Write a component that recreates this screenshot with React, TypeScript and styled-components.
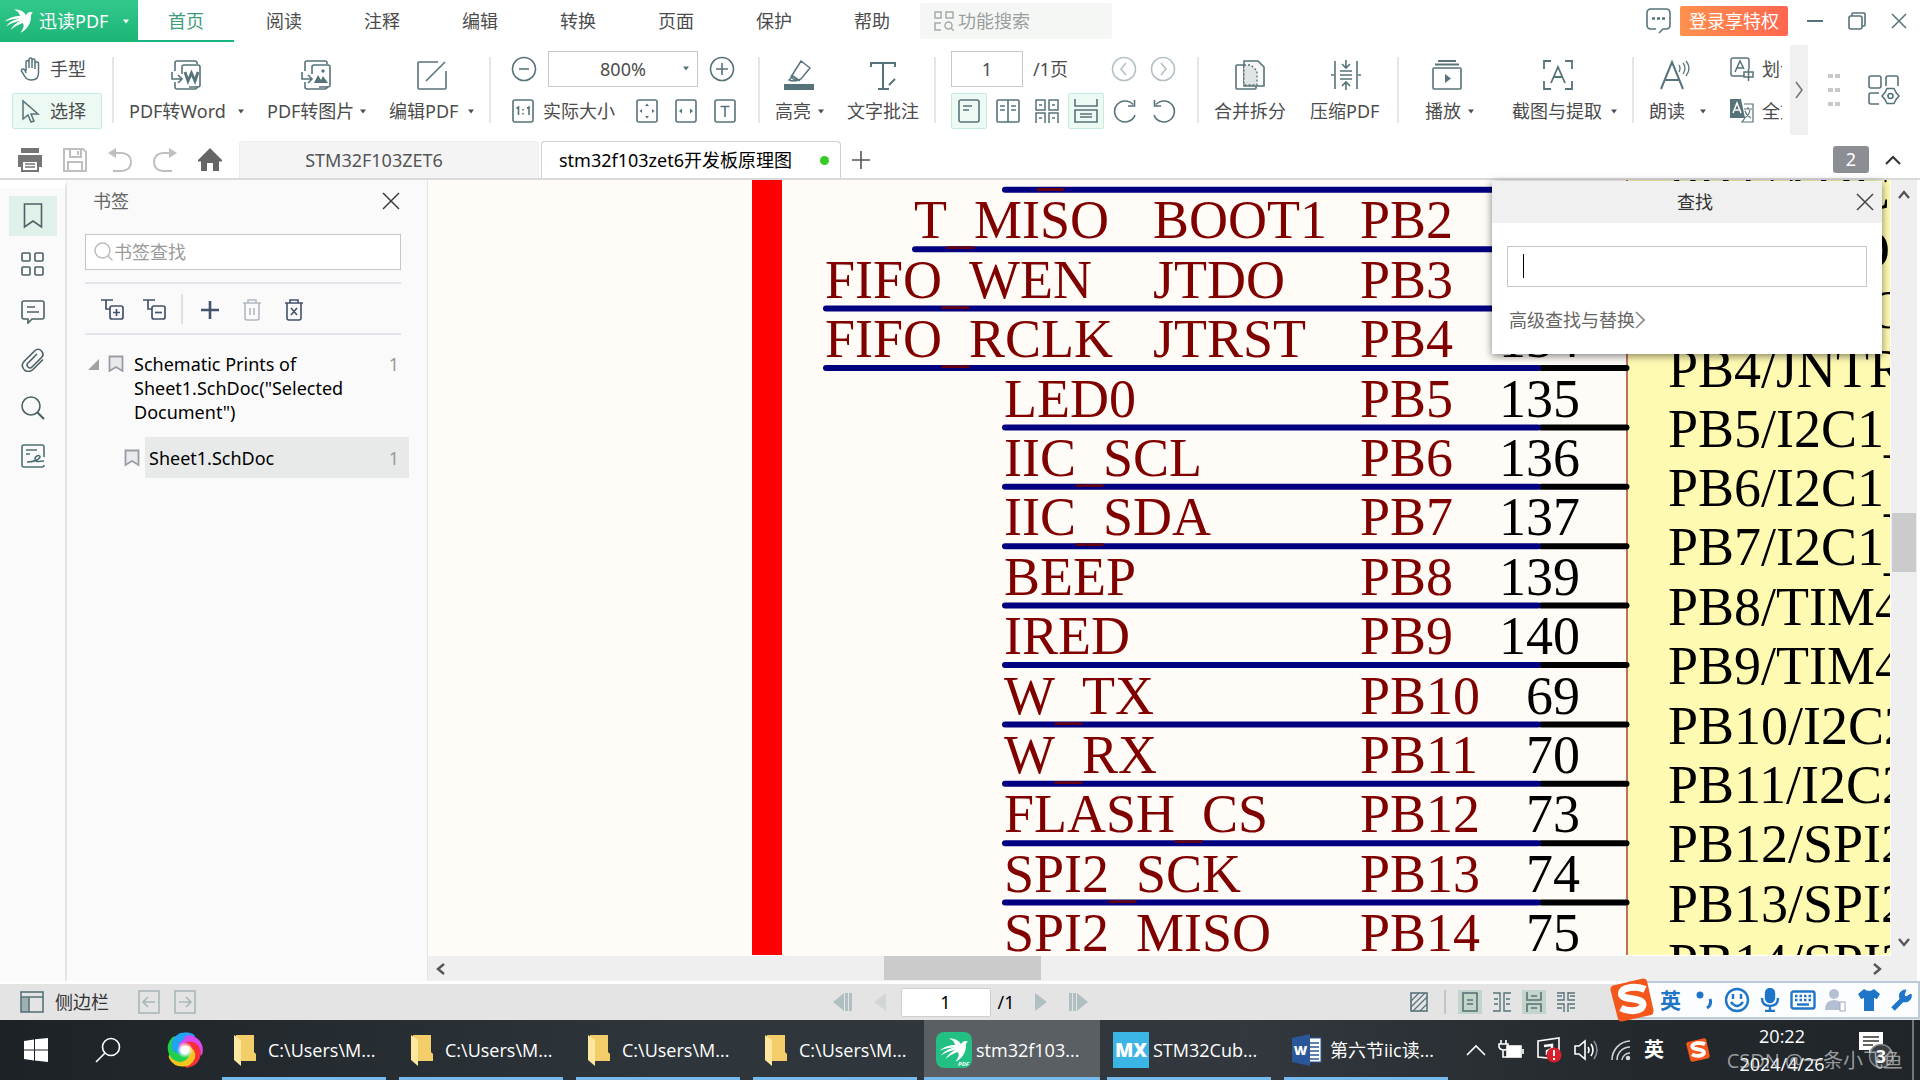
import React from "react";
import styled, { createGlobalStyle } from "styled-components";

const UI = `"Noto Sans", "Noto Sans CJK SC", sans-serif`;
const INK = "#57737a";
const PALE = "#b3c1c3";
const MINT = "#ecfaf3";
const MINT_LINE = "#c5ecdd";

const GlobalStyle = createGlobalStyle`
  * { box-sizing: border-box; }
  html, body { margin: 0; padding: 0; }
  body { font-family: ${UI}; font-size: 18px; line-height: 24px; color: #4c4c4c; background: #fff; overflow: hidden; }
  button, input, select { font: inherit; color: inherit; margin: 0; }
  button { border: 0; background: none; padding: 0; cursor: pointer; white-space: nowrap; }
  a { color: inherit; text-decoration: none; }
  svg { display: block; flex: none; }
`;

const Page = styled.div`
  display: flex;
  flex-direction: column;
  height: 100vh;
  min-height: 600px;
  position: relative;
`;

/* ---------- icons ---------- */
type IconProps = { w?: number; h?: number; color?: string; sw?: number; children: React.ReactNode };
const Icon = ({ w = 24, h = 24, color = INK, sw = 1.6, children }: IconProps) => (
  <svg width={w} height={h} viewBox={`0 0 ${w} ${h}`} fill="none" stroke={color} strokeWidth={sw} aria-hidden="true">
    {children}
  </svg>
);
const Caret = ({ color = "#4c4c4c" }: { color?: string }) => (
  <svg width="8" height="5" viewBox="0 0 8 5" aria-hidden="true"><path d="M1 0.5h6L4 4.5z" fill={color} /></svg>
);
const Close = ({ size = 18, color = "#3c3c3c" }) => (
  <Icon w={size} h={size} color={color} sw={1.5}><path d={`M1 1L${size - 1} ${size - 1}M${size - 1} 1L1 ${size - 1}`} /></Icon>
);
const BIRD = "M9 .5C15 .2 20 3 21 6.500C22 3.500 25 2 28 3.500C26.500 4.200 26 5.500 26 7.500C26 14 22.500 20.500 15.500 23.800C19 19 19.500 16 17.500 14C14 15.500 9 17.500 5.500 21C8 16.500 12 13.500 15.500 11.800C10 13 5 14.500 1 17.500C4 13 9.500 10.500 14.500 9.500C10 9.500 4.500 10.500 0 12.500C4 8.500 10 7 15 7C14.500 4 12.500 1.800 9 .5Z";
const Bird = () => (
  <svg width="28" height="24" viewBox="0 0 28 24" fill="#fff" aria-hidden="true"><path d={BIRD} /></svg>
);
const Sogou = ({ size = 44 }) => (
  <svg width={size} height={size} viewBox="0 0 44 44" aria-hidden="true">
    <path d="M3 7.500L33 .5Q36 0 37 3L43.500 32Q44 36 41 37L12 43.500Q9 44 8 41L.5 12Q0 8.500 3 7.500Z" fill="#f4571c" />
    <path d="M35 11.500C27 7.500 12 9 11.500 15.500C11 23 33 18.500 33 26.500C32.500 33.500 19 34.500 11 30" fill="none" stroke="#fff" strokeWidth="7" />
  </svg>
);

const PageWord = () => (
  <Icon w={30} h={30}>
    <path d="M4 11V3q0-2 2-2h18q2 0 2 2v1M4 22v5q0 2 2 2h18q2 0 2-2v-1" />
    <path d="M11 14V7q0-2 2-2h14q2 0 2 2v18q0 2-2 2H18" />
    <path d="M1 12v7h9M7 15l4 4-4 4" />
    <path d="M14 12l3 9 3.500-8 3.500 8 3-9" strokeWidth="2.800" />
  </Icon>
);
const PageImage = () => (
  <Icon w={30} h={30}>
    <path d="M4 11V3q0-2 2-2h18q2 0 2 2v1M4 22v5q0 2 2 2h18q2 0 2-2v-1" />
    <path d="M11 14V7q0-2 2-2h14q2 0 2 2v18q0 2-2 2H18" />
    <path d="M1 12v7h9M7 15l4 4-4 4" />
    <path d="M13 23l4-8 3 5 2-4 5 7z" fill={INK} stroke="none" /><circle cx="22" cy="11" r="1.700" fill={INK} stroke="none" />
  </Icon>
);
const EditPage = () => (
  <Icon w={30} h={30}><path d="M21 2H2Q1 2 1 3v25q0 1 1 1h26q1 0 1-1V11M9 21L28 2" /></Icon>
);
const Hand = () => (
  <Icon w={22} h={24} sw={1.5}>
    <path d="M6 14V5q0-1.500 1.500-1.500T9 5v6V2.500Q9 1 10.500 1T12 2.500V11V3.500Q12 2 13.500 2T15 3.500V12V6.500Q15 5 16.800 5T18.500 6.500V16q0 7-7 7-5 0-7-4L1.500 14Q1 12 3 12t3 4" />
  </Icon>
);
const Cursor = () => (
  <Icon w={22} h={24} sw={1.5}><path d="M3 2v18l5-4 3 7 3-1-3-7h7z" /></Icon>
);
const Circle = ({ kind, color = INK }: { kind: string; color?: string }) => (
  <Icon w={26} h={26} color={color}>
    <circle cx="13" cy="13" r="11.500" />
    {kind === "minus" && <path d="M8 13h10" />}
    {kind === "plus" && <path d="M7 13h12M13 7v12" />}
    {kind === "prev" && <path d="M15 7l-5 6 5 6" />}
    {kind === "next" && <path d="M11 7l5 6-5 6" />}
  </Icon>
);
const Frame = ({ kind }: { kind: string }) => (
  <Icon w={24} h={24}>
    <rect x="2" y="1" width="20" height="22" rx="2" />
    {kind === "one" && <path d="M5.500 9.500l2-1.500v8M16 9.500l2-1.500v8M12 10v1.500M12 14v1.500" />}
    {kind === "fit" && <path d="M12 4.500l2 2.500h-4zM12 19.500l2-2.500h-4zM4.500 12L7 10v4zM19.500 12L17 10v4z" fill={INK} stroke="none" />}
    {kind === "width" && <path d="M5 12l3-2.500v5zM19 12l-3-2.500v5z" fill={INK} stroke="none" />}
    {kind === "text" && <path d="M7.500 7.500h9M12 7.500V18" />}
    {kind === "page" && <path d="M6 7h9M6 11h6" />}
  </Icon>
);
const TwoUp = () => (
  <Icon w={24} h={24}><rect x="1" y="1" width="22" height="22" rx="1" /><path d="M12 1v22M4 7h5M4 11h5M15 7h5M15 11h5" /></Icon>
);
const FourUp = () => (
  <Icon w={24} h={24} sw={1.5}>
    <rect x="1" y="1" width="9" height="10" /><rect x="14" y="1" width="9" height="10" />
    <path d="M1 24V14h9v10M14 24V14h9v10M4 6h3M17 6h3M4 19h3M17 19h3" />
  </Icon>
);
const Continuous = () => (
  <Icon w={24} h={24}><path d="M1 0v7h22V0M1 11h22v12H1zM6 15h12M6 18h12" /></Icon>
);
const Rotate = ({ flip }: { flip?: boolean }) => (
  <Icon w={24} h={24}>
    <g transform={flip ? "matrix(-1 0 0 1 24 0)" : undefined}><path d="M20 5.500A10.500 10.500 0 1 0 22 16M21.500 1v6h-6.500" /></g>
  </Icon>
);
const Highlight = () => (
  <Icon w={32} h={30} sw={1.5}>
    <path d="M8 17L18 1l9 7-9 11-5 2zM9 15l8 6M6 20l4-4 4 4-5 1z" /><rect x="1" y="24" width="30" height="6" fill={INK} stroke="none" />
  </Icon>
);
const TextNote = () => (
  <Icon w={28} h={30} sw={2}><path d="M2 7V3h24v4M14 3v26M9 29h11M20 25l6-6" /></Icon>
);
const Merge = () => (
  <Icon w={30} h={30}>
    <path d="M9 5H2Q1 5 1 6v22q0 1 1 1h18q1 0 1-1v-2" /><path d="M9 1h14l6 6v19H9z" fill="#f6f7f7" />
    <path d="M9 5h7l6 6v14H9z" strokeDasharray="2 2" fill="#e0e4e5" strokeWidth="1.300" />
  </Icon>
);
const Compress = () => (
  <Icon w={30} h={30}><path d="M4 1v28M26 1v28M0 15h3M27 15h3M9 11h12M9 15h12M9 19h12M15 0v7M11 4l4 4 4-4M15 30v-7M11 26l4-4 4 4" /></Icon>
);
const Play = () => (
  <Icon w={30} h={30}><path d="M6 1h18M3 4.500h24" strokeWidth="2" /><rect x="1" y="8" width="28" height="21" rx="1" /><path d="M13 14l6 4.500-6 4.500z" fill={INK} stroke="none" /></Icon>
);
const Capture = () => (
  <Icon w={30} h={30} sw={1.8}><path d="M8 1H1v8M22 1h7v8M8 29H1v-8M22 29h7v-8M8 23l7-16 7 16M11 17h8" /></Icon>
);
const ReadAloud = () => (
  <Icon w={30} h={30}><path d="M1 29L12 2l11 27M5 20h14" strokeWidth="2" /><path d="M19 5q2 3 0 7M23 3q4 5 0 11M26 1q6 7 0 15" strokeWidth="1.300" /></Icon>
);
const WordTrans = () => (
  <Icon w={24} h={24} sw={1.5}><path d="M14 19H3q-2 0-2-2V3q0-2 2-2h14q2 0 2 2v9M5 15l5-11 4 8M7 11h6M14 15h9v5h-9zM18.500 12v12" /></Icon>
);
const FullTrans = () => (
  <Icon w={24} h={24} sw={1.5}><path d="M0 0h11l4 19H0z" fill={INK} stroke="none" /><path d="M3 14l4-10 4 10M5 11h5" stroke="#fff" /><path d="M14 5h9v18H12l3-4M14 10h8M18 8v2M20 11q-1 6-6 8M15 12q2 5 6 7" strokeWidth="1.200" /></Icon>
);

/* ---------- title bar ---------- */
const TitleBar = styled.header`
  display: flex;
  align-items: center;
  height: 42px;
  flex: none;
`;
const Brand = styled.button`
  display: flex;
  align-items: center;
  width: 138px;
  height: 42px;
  padding: 0 8px 0 5px;
  gap: 6px;
  color: #fff;
  background: linear-gradient(#33c88c, #1cb576);
  > svg:last-child { margin-left: auto; }
`;
const Menu = styled.nav`
  display: flex;
  gap: 2px;
  height: 42px;
`;
const MenuItem = styled.button<{ $on?: boolean }>`
  width: 96px;
  padding-top: 2px;
  color: ${p => (p.$on ? "#3e9d78" : "#4c4c4c")};
  border-bottom: 2px solid ${p => (p.$on ? "#17b583" : "transparent")};
`;
const SearchBox = styled.label`
  display: flex;
  align-items: center;
  gap: 4px;
  width: 192px;
  height: 36px;
  padding: 0 14px;
  border-radius: 3px;
  background: #f5f7f5;
  input { width: 100%; border: 0; outline: 0; background: none; padding: 0; }
  input::placeholder { color: #9a9e9e; opacity: 1; }
`;
const WindowTools = styled.div`
  display: flex;
  align-items: center;
  margin-left: auto;
  padding-right: 7px;
`;
const Login = styled.button`
  width: 108px;
  height: 30px;
  margin: 0 13px 0 8px;
  border-radius: 2px;
  color: #fff;
  background: linear-gradient(90deg, #ff914d, #ff6650);
`;
const WinButton = styled.button`
  display: grid;
  place-items: center;
  width: 28px;
  height: 30px;
  & + & { margin-left: 14px; }
`;

/* ---------- ribbon ---------- */
const Ribbon = styled.section`
  display: flex;
  height: 99px;
  flex: none;
`;
const Tools = styled.div`
  display: flex;
  flex: 1 1 0;
  min-width: 0;
  overflow: hidden;
  padding-top: 9px;
`;
const Group = styled.div<{ $w: number; $pad?: number; $gap?: number; $line?: boolean }>`
  display: flex;
  flex: none;
  width: ${p => p.$w}px;
  height: 78px;
  padding-left: ${p => p.$pad ?? 0}px;
  gap: ${p => p.$gap ?? 0}px;
  background: ${p => (p.$line === false ? "none" : "linear-gradient(#e6e6e6, #e6e6e6) right center / 2px 66px no-repeat")};
`;
const Stack = styled.div`
  display: flex;
  flex-direction: column;
  gap: 6px;
`;
const Line = styled.div<{ $gap?: number }>`
  display: flex;
  align-items: center;
  height: 36px;
  gap: ${p => p.$gap ?? 3}px;
`;
const SmallTool = styled.button<{ $on?: boolean }>`
  display: flex;
  align-items: center;
  gap: 8px;
  height: 36px;
  padding: 0 ${p => (p.$on ? 14 : 15)}px 0 7px;
  border: 1px solid ${p => (p.$on ? MINT_LINE : "transparent")};
  border-radius: 2px;
  background: ${p => (p.$on ? MINT : "none")};
`;
const ActualSize = styled.button`
  display: flex;
  align-items: center;
  gap: 8px;
  width: 109px;
`;
const PageTotal = styled.span`
  width: 68px;
`;
const Square = styled.button<{ $on?: boolean }>`
  display: grid;
  place-items: center;
  width: 36px;
  height: 36px;
  border: 1px solid ${p => (p.$on ? MINT_LINE : "transparent")};
  border-radius: 2px;
  background: ${p => (p.$on ? MINT : "none")};
`;
const BigTool = styled.button<{ $w: number; $tail: number }>`
  display: flex;
  flex-direction: column;
  align-items: center;
  flex: none;
  width: ${p => p.$w}px;
  padding-top: 9px;
  gap: 3px;
  > svg { margin-right: ${p => p.$tail}px; }
`;
const BigLabel = styled.span`
  display: flex;
  align-items: center;
  justify-content: space-between;
  width: 100%;
  height: 36px;
`;
const ZoomBox = styled.span`
  position: relative;
  width: 150px;
  height: 36px;
  margin: 0 11px;
  select {
    appearance: none;
    width: 100%;
    height: 100%;
    padding: 0 8px;
    text-align-last: center;
    border: 1px solid #c8c8c8;
    border-radius: 0;
    background: #fff;
  }
  svg { position: absolute; right: 8px; top: 15px; pointer-events: none; }
`;
const PageInput = styled.input`
  width: 72px;
  height: 36px;
  padding: 0;
  text-align: center;
  border: 1px solid #c8c8c8;
  background: #fff;
`;
const Expander = styled.button`
  display: grid;
  place-items: center;
  width: 18px;
  height: 90px;
  margin: 3px 20px 0 8px;
  border-radius: 2px;
  background: #f0f0f0;
`;
const RibbonEnd = styled.div`
  display: flex;
  align-items: center;
  gap: 28px;
  padding-right: 20px;
  height: 96px;
`;

type BigProps = { w: number; icon: React.ReactNode; label: string; caret?: boolean; tail?: number };
const Big = ({ w, icon, label, caret, tail = 0 }: BigProps) => (
  <BigTool $w={w} $tail={tail}>
    {icon}
    <BigLabel><span>{label}</span>{caret && <Caret />}</BigLabel>
  </BigTool>
);

/* ---------- document tabs ---------- */
const DocBar = styled.div`
  display: flex;
  align-items: center;
  height: 39px;
  flex: none;
  border-bottom: 2px solid #dadada;
`;
const Quick = styled.div`
  display: flex;
  align-items: center;
  gap: 21px;
  width: 239px;
  padding-left: 18px;
`;
const DocTab = styled.button<{ $on?: boolean }>`
  display: flex;
  align-items: center;
  justify-content: ${p => (p.$on ? "space-between" : "center")};
  width: 300px;
  height: 37px;
  margin-right: 2px;
  padding: 0 ${p => (p.$on ? 11 : 30)}px 0 ${p => (p.$on ? 17 : 0)}px;
  color: ${p => (p.$on ? "#000" : "#555")};
  background: ${p => (p.$on ? "#fff" : "#f4f4f4")};
  border: 1px solid ${p => (p.$on ? "#cfcfcf" : "#ececec")};
  border-bottom: 0;
  border-radius: 4px 4px 0 0;
`;
const Dot = styled.i`
  width: 9px;
  height: 9px;
  border-radius: 50%;
  background: #34cc24;
`;
const NewTab = styled.button`
  margin-left: 9px;
`;
const TabCount = styled.span`
  width: 36px;
  height: 27px;
  line-height: 27px;
  margin: 0 16px 0 auto;
  border-radius: 3px;
  text-align: center;
  color: #fff;
  background: #8b8f93;
`;
const Collapse = styled.button`
  margin-right: 19px;
`;

/* ---------- body ---------- */
const Body = styled.main`
  display: flex;
  flex: 1 1 0;
  min-height: 0;
  padding-right: 3px;
  background: #fff;
`;
const Rail = styled.nav`
  display: flex;
  flex-direction: column;
  align-items: center;
  gap: 8px;
  width: 67px;
  padding-top: 8px;
  border-top: 8px solid #fff;
  border-right: 2px solid #e4e4ec;
  background: #fafafa;
`;
const RailButton = styled.button<{ $on?: boolean }>`
  display: grid;
  place-items: center;
  width: 48px;
  height: 40px;
  background: ${p => (p.$on ? "#e0f1ea" : "none")};
`;
const Side = styled.aside`
  width: 361px;
  border-right: 1px solid #e4e4ec;
  background: #fafafa;
  padding: 9px 18px 0;
`;
const SideHead = styled.div`
  display: flex;
  align-items: center;
  justify-content: space-between;
  height: 24px;
  padding: 0 1px 0 8px;
  margin-right: 8px;
  h2 { margin: 0; font-size: 18px; font-weight: 400; color: #666; }
`;
const SideSearch = styled.label`
  display: flex;
  align-items: center;
  height: 36px;
  margin: 21px 8px 12px 0;
  padding: 0 8px;
  border: 1px solid #c6c6c6;
  background: #fff;
  input { width: 100%; border: 0; outline: 0; padding: 0; }
  input::placeholder { color: #9b9b9b; opacity: 1; }
`;
const SideTools = styled.div`
  display: flex;
  align-items: center;
  gap: 18px;
  height: 53px;
  margin-right: 8px;
  padding-left: 15px;
  border: solid #e4e4ec;
  border-width: 2px 0;
  > button { padding-top: 2px; }
  > i { width: 2px; height: 30px; margin: 0 -3px; background: #dfdfe6; }
`;
const Tree = styled.ul`
  list-style: none;
  margin: 17px 0 0;
  padding: 0;
  color: #000;
`;
const Leaf = styled.li<{ $level: number }>`
  display: flex;
  align-items: flex-start;
  padding-left: ${p => p.$level * 36}px;
  & + & { margin-top: 13px; }
`;
const LeafIcons = styled.span<{ $tall?: boolean }>`
  display: flex;
  align-items: center;
  gap: 9px;
  height: ${p => (p.$tall ? 41 : 24)}px;
  padding-left: 3px;
`;
const LeafText = styled.button<{ $on?: boolean }>`
  display: flex;
  flex: 1;
  justify-content: space-between;
  align-items: flex-start;
  margin-left: ${p => (p.$on ? 5 : 8)}px;
  padding: ${p => (p.$on ? 9 : 0)}px 10px ${p => (p.$on ? 8 : 0)}px ${p => (p.$on ? 4 : 2)}px;
  text-align: left;
  white-space: normal;
  background: ${p => (p.$on ? "#e8eaea" : "none")};
  > span:first-child { max-width: 230px; }
  > span:last-child { color: #9a9a9a; }
`;

const Viewer = styled.section`
  position: relative;
  display: grid;
  flex: 1;
  min-width: 0;
  grid-template-columns: minmax(0, 1fr) 26px;
  grid-template-rows: minmax(0, 1fr) 25px;
  background: #efefef;
`;
const Sheet = styled.div`
  overflow: hidden;
  background: #fffcf7;
  border: solid #fff;
  border-width: 0 1px 1px 0;
  svg { width: 100%; height: 100%; }
  text { font-family: "Liberation Serif", serif; font-size: 54px; white-space: pre; }
`;
const VScroll = styled.div`
  display: flex;
  flex-direction: column;
  align-items: center;
  padding: 9px 0 8px;
  > i { width: 24px; height: 59px; background: #cbcbcb; margin-top: 312px; }
  > svg:last-child { margin-top: auto; }
`;
const HScroll = styled.div`
  display: flex;
  align-items: center;
  padding: 0 8px 0 7px;
  > i { width: 157px; height: 24px; background: #cbcbcb; margin: 0 auto 1px 437px; }
`;

/* ---------- find dialog ---------- */
const Find = styled.section`
  position: absolute;
  top: 1px;
  right: 35px;
  width: 390px;
  background: #fff;
  box-shadow: 0 2px 8px rgba(0, 0, 0, 0.5);
`;
const FindHead = styled.div`
  display: flex;
  align-items: center;
  height: 42px;
  padding: 0 8px 0 42px;
  background: #f0f0f0;
  h2 { flex: 1; margin: 0; text-align: center; font-size: 18px; font-weight: 400; color: #333; }
`;
const FindBody = styled.div`
  position: relative;
  padding: 23px 15px 22px;
  input { display: block; width: 100%; height: 41px; padding: 0 15px; border: 1px solid #c6c6c6; outline: 0; }
  > i { position: absolute; left: 31px; top: 31px; width: 1px; height: 24px; background: #000; }
`;
const FindLink = styled.a`
  display: flex;
  align-items: center;
  margin: 21px 0 0 2px;
  color: #666;
`;

/* ---------- status bar ---------- */
const Status = styled.footer`
  display: grid;
  grid-template-columns: 1fr auto 1fr;
  align-items: center;
  flex: none;
  height: 39px;
  border-top: 3px solid #fff;
  background: #e4e4e4;
`;
const StatusPart = styled.div<{ $end?: boolean }>`
  display: flex;
  align-items: center;
  justify-content: ${p => (p.$end ? "flex-end" : "flex-start")};
  gap: ${p => (p.$end ? 8 : 11)}px;
  padding: 0 ${p => (p.$end ? 342 : 0)}px 0 ${p => (p.$end ? 0 : 20)}px;
  button { display: grid; place-items: center; }
  > span { width: 72px; color: #333; }
`;
const History = styled.div`
  display: flex;
  gap: 14px;
`;
const Pager = styled.div`
  display: flex;
  align-items: center;
  color: #000;
  input { width: 90px; height: 29px; padding: 0; margin: 0 7px 0 15px; text-align: center; border: 1px solid #cfcfcf; border-radius: 2px; background: #fff; }
  button + button { margin-left: 22px; }
  button:nth-of-type(3) { margin-left: 20px; }
`;
const View = styled.button<{ $on?: boolean }>`
  width: 24px;
  height: 24px;
  background: ${p => (p.$on ? "#c3d5ca" : "none")};
`;
const Rule = styled.i`
  width: 2px;
  height: 24px;
  margin: 0 4px 0 8px;
  background: #c4c4c4;
`;

/* ---------- input method bar ---------- */
const Ime = styled.div`
  position: absolute;
  right: 0;
  bottom: 61px;
  display: grid;
  grid-template-columns: repeat(8, 33px);
  place-items: center;
  width: 292px;
  height: 38px;
  padding-left: 24px;
  border: 2px solid #bccbd9;
  background: #fcfdfe;
  color: #1f76c8;
  b { font-size: 21px; font-weight: 700; line-height: 24px; }
`;
const ImeLogo = styled.span`
  position: absolute;
  left: -20px;
  top: -5px;
`;

/* ---------- taskbar ---------- */
const Taskbar = styled.div`
  display: flex;
  flex: none;
  height: 60px;
  color: #fff;
  font-family: "Open Sans", "Noto Sans CJK SC", sans-serif;
  background: linear-gradient(90deg, #1c2226, #2f363b 35%, #32383d 65%, #23292d 85%, #1f2529);
`;
const Launch = styled.div`
  display: flex;
  align-items: center;
  width: 216px;
  padding-left: 24px;
  gap: 45px;
`;
const Tasks = styled.div`
  display: flex;
  gap: 1px;
`;
const Task = styled.button<{ $on?: boolean }>`
  display: flex;
  align-items: center;
  gap: 4px;
  width: 176px;
  padding: 0 12px;
  background: ${p => (p.$on ? "linear-gradient(#76b9ed, #76b9ed) center bottom / 176px 3px no-repeat, #5a5f64" : "linear-gradient(#76b9ed, #76b9ed) center bottom / 164px 3px no-repeat")};
  > svg { width: 36px; height: 36px; }
`;
const Tray = styled.div`
  position: relative;
  display: flex;
  align-items: center;
  margin-left: auto;
  padding-right: 6px;
  > svg { margin-right: 12px; }
  > b { font-size: 20px; margin-right: 22px; }
`;
const Clock = styled.time`
  display: flex;
  flex-direction: column;
  gap: 4px;
  align-items: center;
  width: 94px;
  margin: 0 29px 0 13px;
`;
const Watermark = styled.span`
  position: absolute;
  right: 17px;
  bottom: 6px;
  font-size: 20px;
  line-height: 26px;
  color: rgba(220, 220, 220, 0.65);
  white-space: nowrap;
`;
const Peek = styled.i`
  width: 2px;
  height: 60px;
  background: #70767a;
`;

/* ---------- schematic ---------- */
const PITCH = 59.4;
const nets = [
  { x: 486, net: "T_MISO", alt: "BOOT1", port: "PB2", pin: "48" },
  { x: 397, net: "FIFO_WEN", alt: "JTDO", port: "PB3", pin: "133" },
  { x: 397, net: "FIFO_RCLK", alt: "JTRST", port: "PB4", pin: "134" },
  { x: 576, net: "LED0", port: "PB5", pin: "135" },
  { x: 576, net: "IIC_SCL", port: "PB6", pin: "136" },
  { x: 576, net: "IIC_SDA", port: "PB7", pin: "137" },
  { x: 576, net: "BEEP", port: "PB8", pin: "139" },
  { x: 576, net: "IRED", port: "PB9", pin: "140" },
  { x: 576, net: "W_TX", port: "PB10", pin: "69" },
  { x: 576, net: "W_RX", port: "PB11", pin: "70" },
  { x: 576, net: "FLASH_CS", port: "PB12", pin: "73" },
  { x: 576, net: "SPI2_SCK", port: "PB13", pin: "74" },
  { x: 576, net: "SPI2_MISO", port: "PB14", pin: "75" },
];
const chipPins = [
  "PB1/ADC12_IN9", "PB2/BOOT1", "PB3/JTDO", "PB4/JNTRST", "PB5/I2C1_SMBA", "PB6/I2C1_SCL", "PB7/I2C1_SDA",
  "PB8/TIM4_CH3", "PB9/TIM4_CH4", "PB10/I2C2_SCL", "PB11/I2C2_SDA", "PB12/SPI2_NSS", "PB13/SPI2_SCK", "PB14/SPI2_MISO",
];
/* Underscores hang low enough to touch the wire below the label. */
const Label = ({ text, x, y, fill, under = fill }: { text: string; x: number; y: number; fill: string; under?: string }) => {
  const [head, tail] = text.split("_");
  return (
    <text x={x} y={y} fill={fill}>
      {head}
      {tail !== undefined && <><tspan dy="4" fill={under}>_</tspan><tspan dy="-4">{tail}</tspan></>}
    </text>
  );
};
const Wire = ({ x, y }: { x: number; y: number }) => (
  <g strokeWidth="6" strokeLinecap="round">
    <path d={`M1113 ${y}H1198.500`} stroke="#000" />
    <path d={`M${x} ${y}H1110`} stroke="#000080" />
  </g>
);
const Schematic = () => (
  <svg role="img" aria-label="stm32f103zet6">
    <rect x="324" y="0" width="30" height="100%" fill="#f00" />
    <rect x="1199" y="0" width="400" height="100%" fill="#fffab2" />
    <rect x="1198" y="0" width="2" height="100%" fill="#c2705c" />
    <Wire x={577} y={9.7} />
    {nets.map((n, i) => <Wire key={n.port} x={n.x + 1} y={69.2 + i * PITCH} />)}
    <rect x="609" y="8" width="27" height="3" fill="#640012" />
    {nets.map((n, i) => (
      <g key={n.port} fill="#800000">
        <Label x={n.x} y={58.3 + i * PITCH} text={n.net} fill="#800000" under="#640012" />
        {n.alt && <text x="725" y={58.3 + i * PITCH}>{n.alt}</text>}
        <text x="932" y={58.3 + i * PITCH}>{n.port}</text>
        <text x="1152" y={58.3 + i * PITCH} textAnchor="end" fill="#000">{n.pin}</text>
      </g>
    ))}
    {chipPins.map((t, i) => <Label key={t} x={1240} y={29 + i * PITCH} text={t} fill="#000" />)}
  </svg>
);

const Folder = () => (
  <svg viewBox="0 0 36 36" aria-hidden="true"><path d="M8 3h18v17l2 2v7H8z" fill="#f2cd6a" /><path d="M6 3l7 5v26l-7-6z" fill="#ffe7a0" /></svg>
);
const Chevron = ({ d, w = 12, h = 12 }: { d: string; w?: number; h?: number }) => (
  <Icon w={w} h={h} color="#555" sw={2.4}><path d={d} /></Icon>
);
const Mark = () => (
  <Icon w={16} h={18} color="#9a9ca4" sw={1.8}><path d="M1.500 1.500h13V16L8 12l-6.500 4z" fill="#e9eaee" /></Icon>
);
const Pinwheel = () => (
  <svg width="38" height="38" viewBox="-19 -19 38 38" aria-hidden="true">
    <defs>
      <radialGradient id="glow"><stop offset="0.450" stopColor="#fff" /><stop offset="1" stopColor="#fff" stopOpacity="0" /></radialGradient>
    </defs>
    <g fill="none" strokeWidth="7.500" strokeLinecap="round">
      {["#22a2f2", "#d84af0", "#f4303c", "#f6c41c", "#1fd04c"].map((c, i) => (
        <path key={c} transform={`rotate(${i * 72 - 20})`} d="M10-10C4-16-7-14-8-5Q-8-1-3 1" stroke={c} />
      ))}
      <path transform="rotate(-20)" d="M1-13.800C-4-13-7.500-10-8-5" stroke="#22a2f2" />
    </g>
    <circle r="8" fill="url(#glow)" />
  </svg>
);

export default function App() {
  return (
    <Page>
      <GlobalStyle />
      <TitleBar>
        <Brand><Bird /><span>迅读PDF</span><Caret color="#fff" /></Brand>
        <Menu>
          {["首页", "阅读", "注释", "编辑", "转换", "页面", "保护", "帮助"].map((t, i) => (
            <MenuItem key={t} $on={i === 0}>{t}</MenuItem>
          ))}
        </Menu>
        <SearchBox>
          <Icon w={20} h={20} color="#a5abab" sw={1.5}><rect x="1" y="1" width="6" height="6" /><rect x="12" y="1" width="7" height="6" /><path d="M7 12H1v7h6" /><circle cx="14.500" cy="14.500" r="3.500" /><path d="M17 17l3 3" /></Icon>
          <input placeholder="功能搜索" aria-label="功能搜索" />
        </SearchBox>
        <WindowTools>
          <button aria-label="消息"><Icon w={26} h={26}><path d="M10 21H5q-4 0-4-4V5q0-4 4-4h15q4 0 4 4v12q0 4-4 4h-3l-4 4" /><path d="M6 10.500h3M11 10.500h3M16 10.500h3" strokeWidth="2.500" /></Icon></button>
          <Login>登录享特权</Login>
          <WinButton aria-label="最小化"><Icon w={16} h={18} sw={2}><path d="M0 9h16" /></Icon></WinButton>
          <WinButton aria-label="还原"><Icon w={18} h={18}><rect x="1" y="4" width="13" height="13" rx="2" /><path d="M4 4V2q0-1 1-1h11q1 0 1 1v11q0 1-1 1h-2" /></Icon></WinButton>
          <WinButton aria-label="关闭"><Close size={16} color={INK} /></WinButton>
        </WindowTools>
      </TitleBar>

      <Ribbon>
        <Tools>
          <Group $w={114} $pad={12}>
            <Stack>
              <SmallTool><Hand />手型</SmallTool>
              <SmallTool $on><Cursor />选择</SmallTool>
            </Stack>
          </Group>
          <Group $w={377} $pad={15} $gap={22}>
            <Big w={116} icon={<PageWord />} label="PDF转Word" caret tail={2} />
            <Big w={100} icon={<PageImage />} label="PDF转图片" caret tail={2} />
            <Big w={86} icon={<EditPage />} label="编辑PDF" caret />
          </Group>
          <Group $w={269} $pad={20}>
            <Stack>
              <Line $gap={0}>
                <button aria-label="缩小"><Circle kind="minus" /></button>
                <ZoomBox>
                  <select aria-label="缩放" defaultValue="800%"><option>800%</option></select>
                  <Caret color={INK} />
                </ZoomBox>
                <button aria-label="放大"><Circle kind="plus" /></button>
              </Line>
              <Line $gap={15}>
                <ActualSize><Frame kind="one" />实际大小</ActualSize>
                <button aria-label="适合页面"><Frame kind="fit" /></button>
                <button aria-label="适合宽度"><Frame kind="width" /></button>
                <button aria-label="适合文字"><Frame kind="text" /></button>
              </Line>
            </Stack>
          </Group>
          <Group $w={176} $pad={15} $gap={22}>
            <Big w={50} icon={<Highlight />} label="高亮" caret tail={2} />
            <Big w={72} icon={<TextNote />} label="文字批注" />
          </Group>
          <Group $w={263} $pad={15}>
            <Stack>
              <Line $gap={10}>
                <PageInput defaultValue="1" aria-label="页码" />
                <PageTotal>/1页</PageTotal>
                <Line $gap={13}>
                  <button aria-label="上一页"><Circle kind="prev" color={PALE} /></button>
                  <button aria-label="下一页"><Circle kind="next" color={PALE} /></button>
                </Line>
              </Line>
              <Line>
                <Square $on aria-label="单页"><Frame kind="page" /></Square>
                <Square aria-label="双页"><TwoUp /></Square>
                <Square aria-label="四页"><FourUp /></Square>
                <Square $on aria-label="连续"><Continuous /></Square>
                <Square aria-label="顺时针旋转"><Rotate /></Square>
                <Square aria-label="逆时针旋转"><Rotate flip /></Square>
              </Line>
            </Stack>
          </Group>
          <Group $w={200} $pad={15} $gap={24}>
            <Big w={72} icon={<Merge />} label="合并拆分" />
            <Big w={72} icon={<Compress />} label="压缩PDF" />
          </Group>
          <Group $w={235} $pad={26} $gap={37}>
            <Big w={50} icon={<Play />} label="播放" caret tail={6} />
            <Big w={106} icon={<Capture />} label="截图与提取" caret tail={14} />
          </Group>
          <Group $w={190} $pad={15} $gap={15} $line={false}>
            <Big w={58} icon={<ReadAloud />} label="朗读" caret tail={6} />
            <Stack>
              <SmallTool><WordTrans />划词翻译</SmallTool>
              <SmallTool><FullTrans />全文翻译</SmallTool>
            </Stack>
          </Group>
        </Tools>
        <Expander aria-label="更多"><Icon w={8} h={18} color="#777"><path d="M1 1l6 8-6 8" /></Icon></Expander>
        <RibbonEnd>
          <svg width="12" height="34" viewBox="0 0 12 34" fill="#c9c9c9" aria-hidden="true"><path d="M0 1h5v4H0zM7 1h5v4H7zM0 15h5v4H0zM7 15h5v4H7zM0 29h5v4H0zM7 29h5v4H7z" /></svg>
          <button aria-label="工具设置"><Icon w={32} h={30}><rect x="1" y="1" width="12" height="12" rx="2" /><path d="M18 11V3q0-2 2-2h8q2 0 2 2v8M11 29H3q-2 0-2-2v-7q0-2 2-2h8" /><path d="M19 13.500h7l2 4 3 3.500-3 3.500-2 4h-7l-2-4-3-3.500 3-3.500z" strokeLinejoin="round" /><circle cx="22.500" cy="21" r="2.500" /></Icon></button>
        </RibbonEnd>
      </Ribbon>

      <DocBar>
        <Quick>
          <button aria-label="打印"><svg width="24" height="24" viewBox="0 0 24 24"><path d="M3 0h18v5H3zM0 7h24v12h-3v-6H3v6H0z" fill="#757575" /><path d="M4 13h16v10H4z" fill="#fff" stroke="#757575" strokeWidth="2" /><path d="M7 16h10M7 19h10" stroke="#757575" strokeWidth="1.500" /></svg></button>
          <button aria-label="保存"><Icon color="#bfbfbf" sw={2}><path d="M1 1h19l3 3v19H1zM7 1v8h11V1M15 3v4M5 23V14h14v9" /></Icon></button>
          <button aria-label="撤销"><Icon color="#bfbfbf" sw={2}><path d="M3 5h11q9 1 9 9t-9 9H5" /><path d="M8 0v10L0 5z" fill="#bfbfbf" stroke="none" /></Icon></button>
          <button aria-label="重做"><Icon color="#bfbfbf" sw={2}><path d="M21 5H10q-9 1-9 9t9 9h9" /><path d="M16 0v10l8-5z" fill="#bfbfbf" stroke="none" /></Icon></button>
          <button aria-label="主页"><svg width="24" height="24" viewBox="0 0 24 24" fill="#666"><path d="M12 0l12 12v1.500h-3V23h-6v-8H9v8H3v-9.500H0V12z" /></svg></button>
        </Quick>
        <DocTab>STM32F103ZET6</DocTab>
        <DocTab $on>stm32f103zet6开发板原理图<Dot /></DocTab>
        <NewTab aria-label="新建标签"><Icon w={18} h={18} color="#555"><path d="M9 0v18M0 9h18" /></Icon></NewTab>
        <TabCount>2</TabCount>
        <Collapse aria-label="收起"><Icon w={16} h={10} color="#333" sw={2}><path d="M1 9l7-7 7 7" /></Icon></Collapse>
      </DocBar>

      <Body>
        <Rail>
          <RailButton $on aria-label="书签"><Icon w={20} h={26} color="#4d6266"><path d="M1.500 1h17v23L10 18l-8.500 6z" /></Icon></RailButton>
          <RailButton aria-label="缩略图"><Icon color="#4d6266"><rect x="1" y="1" width="8" height="8" rx="1" /><rect x="14" y="1" width="8" height="8" rx="1" /><rect x="1" y="15" width="8" height="8" rx="1" /><rect x="14" y="15" width="8" height="8" rx="1" /></Icon></RailButton>
          <RailButton aria-label="注释"><Icon color="#4d6266"><path d="M3 1h18q2 0 2 2v14q0 2-2 2H11l-4 4v-4H3q-2 0-2-2V3q0-2 2-2zM6 7h8M6 12h12" /></Icon></RailButton>
          <RailButton aria-label="附件"><Icon color="#4d6266"><path d="M22 11.500L12.500 21q-4 4-8.500 1.500-5-4.500-1-9L13.500 3q3.500-3.500 7 0 3 3.500 0 6.500L11 19q-2 2-4 0-2-2 0-4l9-9" /></Icon></RailButton>
          <RailButton aria-label="搜索"><Icon color="#4d6266"><circle cx="10" cy="10" r="9" /><path d="M16.500 16.500L23 23" strokeWidth="2.200" /></Icon></RailButton>
          <RailButton aria-label="签名"><Icon color="#4d7076"><path d="M23 13V3q0-2-2-2H3Q1 1 1 3v18q0 2 2 2h18q2 0 2-2M5 6h11M5 10h4" /><path d="M6 18c6 0 12-2 13-5 0-3-5-1-5 2 0 4 5 2 9 2" /></Icon></RailButton>
        </Rail>

        <Side>
          <SideHead><h2>书签</h2><button aria-label="关闭书签"><Close /></button></SideHead>
          <SideSearch>
            <Icon w={20} h={20} color="#bcbcbc" sw={1.5}><circle cx="8.500" cy="8.500" r="7.500" /><path d="M14 14l4.500 4.500" /></Icon>
            <input placeholder="书签查找" aria-label="书签查找" />
          </SideSearch>
          <SideTools>
            <button aria-label="展开"><Icon color="#44526b" sw={1.7}><path d="M1 2h12M6 2v9h4" /><rect x="10" y="8" width="13" height="13" rx="2" /><path d="M13 14.500h7M16.500 11v7" /></Icon></button>
            <button aria-label="折叠"><Icon color="#44526b" sw={1.7}><path d="M1 2h12M6 2v9h4" /><rect x="10" y="8" width="13" height="13" rx="2" /><path d="M13 14.500h7" /></Icon></button>
            <i />
            <button aria-label="添加书签"><Icon color="#44526b" sw={2.6}><path d="M12 3v18M3 12h18" /></Icon></button>
            <button aria-label="删除"><Icon color="#b3b8c2"><path d="M3 5h18M8 5V2h8v3M5 5v15q0 2 2 2h10q2 0 2-2V5M10 10v7M14 10v7" /></Icon></button>
            <button aria-label="全部删除"><Icon color="#44526b"><path d="M3 5h18M8 5V2h8v3M5 5v15q0 2 2 2h10q2 0 2-2V5M9 10l6 7M15 10l-6 7" /></Icon></button>
          </SideTools>
          <Tree>
            <Leaf $level={0}>
              <LeafIcons><svg width="11" height="11" viewBox="0 0 11 11"><path d="M11 0v11H0z" fill="#a2a2a2" /></svg><Mark /></LeafIcons>
              <LeafText><span>Schematic Prints of Sheet1.SchDoc("Selected Document")</span><span>1</span></LeafText>
            </Leaf>
            <Leaf $level={1}>
              <LeafIcons $tall><Mark /></LeafIcons>
              <LeafText $on><span>Sheet1.SchDoc</span><span>1</span></LeafText>
            </Leaf>
          </Tree>
        </Side>

        <Viewer>
          <Sheet><Schematic /></Sheet>
          <VScroll><Chevron d="M1 9l5-6 5 6" /><i /><Chevron d="M1 3l5 6 5-6" /></VScroll>
          <HScroll><Chevron d="M9 1L3 6l6 5" /><i /><Chevron d="M3 1l6 5-6 5" /></HScroll>
          <Find>
            <FindHead><h2>查找</h2><button aria-label="关闭查找"><Close color="#444" /></button></FindHead>
            <FindBody>
              <input aria-label="查找" /><i />
              <FindLink href="#advanced">高级查找与替换<Icon w={10} h={18} color="#888"><path d="M1 1l8 8-8 8" /></Icon></FindLink>
            </FindBody>
          </Find>
        </Viewer>
      </Body>

      <Status>
        <StatusPart>
          <button aria-label="切换侧边栏"><Icon w={24} h={22}><path d="M1 6h8v15H1z" fill="#9fb0b3" stroke="none" /><rect x="1" y="1" width="22" height="20" /><path d="M1 6h22M9 6v15" /></Icon></button>
          <span>侧边栏</span>
          <History>
            <button aria-label="后退"><Icon w={22} h={24} color="#a9b7b9"><rect x="1" y="1" width="20" height="22" /><path d="M17 12H5M10 7l-5 5 5 5" /></Icon></button>
            <button aria-label="前进"><Icon w={22} h={24} color="#a9b7b9"><rect x="1" y="1" width="20" height="22" /><path d="M5 12h12M12 7l5 5-5 5" /></Icon></button>
          </History>
        </StatusPart>
        <Pager>
          <button aria-label="首页"><svg width="19" height="18" viewBox="0 0 19 18" fill="#b0c0c2"><path d="M11 0v18L0 9zM12 0h3v18h-3zM16 0h3v18h-3z" /></svg></button>
          <button aria-label="上一页"><svg width="12" height="18" viewBox="0 0 12 18" fill="#d2d6d6"><path d="M12 0v18L0 9z" /></svg></button>
          <input defaultValue="1" aria-label="当前页" />/1
          <button aria-label="下一页"><svg width="12" height="18" viewBox="0 0 12 18" fill="#b0c0c2"><path d="M0 0v18l12-9z" /></svg></button>
          <button aria-label="末页"><svg width="19" height="18" viewBox="0 0 19 18" fill="#b0c0c2"><path d="M8 0v18l11-9zM4 0h3v18H4zM0 0h3v18H0z" /></svg></button>
        </Pager>
        <StatusPart $end>
          <button aria-label="背景"><Icon w={18} h={20}><rect x="1" y="1" width="16" height="18" /><path d="M1 9l8-8M1 15L15 1M3 19L17 5M10 19l7-7" strokeWidth="1.200" /></Icon></button>
          <Rule />
          <View $on aria-label="单页视图"><Icon w={18} h={20}><rect x="2" y="1" width="14" height="18" /><path d="M6 8h6M6 12h6" /></Icon></View>
          <View aria-label="双页视图"><Icon w={18} h={20} sw={1.4}><path d="M0 1h7v18H0M18 1h-7v18h7M1 7h4M1 12h4M13 7h4M13 12h4" /></Icon></View>
          <View $on aria-label="连续视图"><Icon w={18} h={20}><path d="M2 0v8h14V0M2 20v-8h14v8M6 4h6M6 16h6" /></Icon></View>
          <View aria-label="连续双页视图"><Icon w={18} h={20} sw={1.4}><path d="M0 8h7V0M18 8h-7V0M0 12h7v8M18 12h-7v8M0 4h5M13 4h5M0 16h5M13 16h5M0 1h7M11 1h7" /></Icon></View>
        </StatusPart>
      </Status>

      <Taskbar>
        <Launch>
          <button aria-label="开始"><svg width="24" height="24" viewBox="0 0 24 24" fill="#fff"><path d="M0 3l10-1.500V11.500H0zM11 1.300L24 0v11.500H11zM0 12.500h10v10L0 21zM11 12.500h13V24l-13-1.500z" /></svg></button>
          <button aria-label="搜索"><Icon w={28} h={26} color="#fff"><circle cx="18" cy="10" r="8.500" /><path d="M12 16L3 25" /></Icon></button>
          <button aria-label="浏览器"><Pinwheel /></button>
        </Launch>
        <Tasks>
          {[0, 1, 2, 3].map(i => <Task key={i}><Folder />C:\Users\M...</Task>)}
          <Task $on>
            <svg viewBox="0 0 36 36"><rect width="36" height="36" rx="8" fill="#22c083" /><path transform="translate(4 6)" fill="#fff" d={BIRD} /><text x="22" y="34" fontSize="6" fontStyle="italic" fontWeight="700" fill="#fff">PDF</text></svg>
            stm32f103...
          </Task>
          <Task><svg viewBox="0 0 36 36"><rect width="36" height="36" fill="#3bb4e6" /><text x="18" y="25" textAnchor="middle" fontSize="19" fontWeight="800" fill="#fff">MX</text></svg>STM32Cub...</Task>
          <Task><svg viewBox="0 0 36 36"><rect x="18" y="6" width="13" height="24" fill="#fff" stroke="#2a579a" /><path d="M20 11h9M20 15h9M20 19h9M20 23h9M20 27h9" stroke="#2a579a" strokeWidth="1.500" /><path d="M2 6l18-4v32L2 30z" fill="#2a579a" /><text x="10.500" y="23" textAnchor="middle" fontSize="13" fontWeight="800" fill="#fff">W</text></svg>第六节iic读...</Task>
        </Tasks>
        <Tray>
          <Icon w={20} h={12} color="#fff"><path d="M1 11l9-9 9 9" /></Icon>
          <Icon w={26} h={20} color="#fff"><path d="M3 0v4M8 0v4M1 4h9v3q0 3-4 3t-5-3zM5 10v7h4" /><rect x="9" y="6" width="14" height="11" fill="#fff" /><path d="M25 9v5" /></Icon>
          <Icon w={26} h={26} color="#fff"><path d="M2 4l21-3v21L2 20z" /><path d="M8 9l8-1v4l-5 2v4" strokeWidth="2.500" /><circle cx="18" cy="18" r="7.500" fill="#d91e2c" stroke="none" /><path d="M18 13v6M18 21v2" strokeWidth="2" /></Icon>
          <Icon w={24} h={22} color="#fff"><path d="M1 7h4l6-5v18l-6-5H1zM14 8q2 3 0 6M17 5q4 6 0 12" /><path d="M20 2q6 9 0 18" stroke="#889" /></Icon>
          <Icon w={22} h={22} color="#d0d3d5"><path d="M2 21A19 19 0 0 1 20 2M7 21A13 13 0 0 1 20 8M12 21a8 8 0 0 1 8-7" /><circle cx="18" cy="19" r="1.500" fill="#fff" /></Icon>
          <b>英</b>
          <Sogou size={24} />
          <Clock><span>20:22</span><span>2024/4/26</span></Clock>
          <svg width="42" height="40" viewBox="0 0 42 40" aria-hidden="true"><path d="M1 2h24v18h-8l-6 6v-6H1z" fill="#fff" /><path d="M5 7h16M5 11h16M5 15h10" stroke="#333" strokeWidth="1.500" /><circle cx="23" cy="26" r="11.500" fill="#3a3f43" stroke="#888" strokeWidth="1.500" /><text x="23" y="33" textAnchor="middle" fontSize="18" fontWeight="700" fill="#fff">3</text></svg>
          <Peek />
          <Watermark>CSDN @一条小飞鱼</Watermark>
        </Tray>
      </Taskbar>

      <Ime>
        <ImeLogo><Sogou /></ImeLogo>
        <b>英</b>
        <Icon w={18} h={20} color="#1f76c8"><circle cx="5" cy="5" r="3.500" fill="#1f76c8" stroke="none" /><path d="M15 9q2 6-3 9" strokeWidth="3" /></Icon>
        <Icon w={26} h={26} color="#1f76c8" sw={2.4}><circle cx="13" cy="13" r="11" /><path d="M9 7v5M17 7v5M7 15q6 8 12 0" /></Icon>
        <Icon w={20} h={24} color="#1f76c8" sw={2.4}><rect x="6" y="1" width="8" height="13" rx="4" fill="#1f76c8" /><path d="M2 10q0 8 8 8t8-8M10 18v5M5 23h10" /></Icon>
        <Icon w={26} h={20} color="#1f76c8" sw={2.4}><rect x="1.500" y="1.500" width="23" height="17" rx="2" /><path d="M5 6h16M5 10h16" strokeDasharray="2.500 2" /><path d="M7 14.500h12" /></Icon>
        <svg width="22" height="24" viewBox="0 0 22 24"><circle cx="9" cy="6" r="5" fill="#b4bfd4" /><path d="M0 22q0-10 9-10t9 10z" fill="#b4bfd4" /><rect x="15" y="14" width="5" height="9" fill="#fff" stroke="#9aa8c0" /></svg>
        <svg width="22" height="22" viewBox="0 0 22 22" fill="#1f76c8"><path d="M6 0q5 4 10 0l6 5-3 5-3-1v13H6V9l-3 1-3-5z" /></svg>
        <svg width="22" height="22" viewBox="0 0 22 22" fill="none" stroke="#1f76c8"><path d="M2 20L12 10" strokeWidth="5" /><path d="M20 5a6 6 0 1 1-5-4l-2 5 2 2z" fill="#1f76c8" strokeWidth="1" /></svg>
      </Ime>
    </Page>
  );
}
